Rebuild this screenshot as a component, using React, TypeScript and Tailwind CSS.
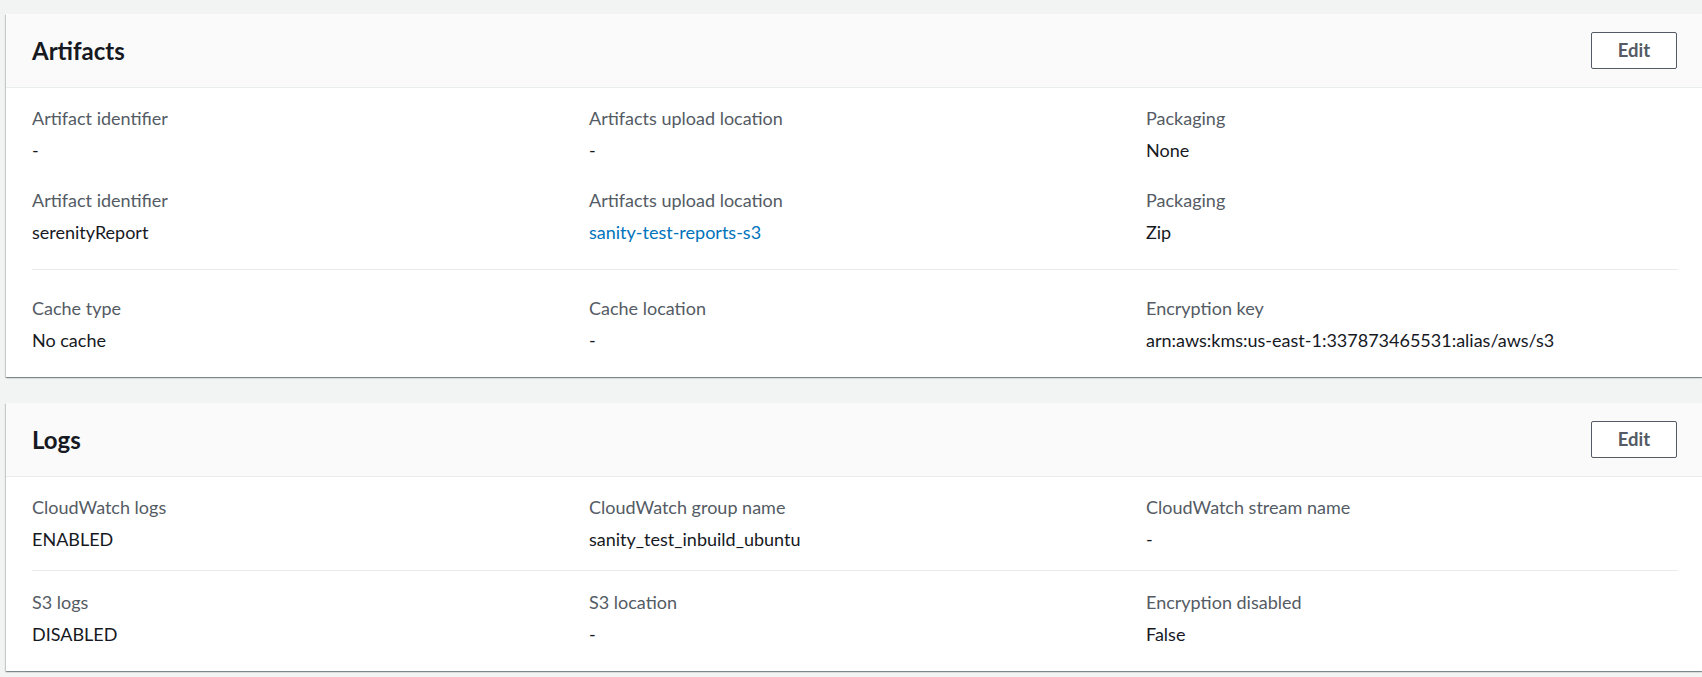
import React from 'react';

type Field = { label: string; value: string; link?: boolean };

const FieldCell = ({ label, value, link }: Field) => (
  <div>
    <div className="text-[18px] leading-[24px] text-[#545b64]">{label}</div>
    <div
      className={`mt-[8px] text-[18px] leading-[24px] ${link ? 'text-[#0073bb]' : 'text-[#16191f]'}`}
    >
      {value}
    </div>
  </div>
);

const Row = ({ fields }: { fields: Field[] }) => (
  <div className="grid grid-cols-3 gap-x-[25px]">
    {fields.map((f, i) => (
      <FieldCell key={i} {...f} />
    ))}
  </div>
);

const Card = ({ title, children }: { title: string; children: React.ReactNode }) => (
  <section className="bg-white shadow-[0_1px_1px_0_rgba(0,28,36,0.3),1px_1px_1px_0_rgba(0,28,36,0.15),-1px_1px_1px_0_rgba(0,28,36,0.15)]">
    <div className="flex h-[74px] items-center justify-between border-b border-[#eaeded] bg-[#fafafa] pl-[26px] pr-[25px]">
      <h2 className="text-[24px] font-bold text-[#16191f]">{title}</h2>
      <button className="h-[37px] w-[86px] rounded-[2px] border border-[#545b64] bg-white text-[18.5px] font-bold text-[#545b64]">
        Edit
      </button>
    </div>
    <div className="pb-[25px] pl-[26px] pr-[24px] pt-[18px]">{children}</div>
  </section>
);

export default function App() {
  return (
    <div
      className="min-h-screen bg-[#f2f3f3] pl-[6px] pt-[14px]"
      style={{ fontFamily: 'Lato, "Noto Sans", sans-serif' }}
    >
      <Card title="Artifacts">
        <Row
          fields={[
            { label: 'Artifact identifier', value: '-' },
            { label: 'Artifacts upload location', value: '-' },
            { label: 'Packaging', value: 'None' },
          ]}
        />
        <div className="mt-[26px]">
          <Row
            fields={[
              { label: 'Artifact identifier', value: 'serenityReport' },
              { label: 'Artifacts upload location', value: 'sanity-test-reports-s3', link: true },
              { label: 'Packaging', value: 'Zip' },
            ]}
          />
        </div>
        <div className="mb-[26px] mt-[25px] border-t border-[#eaeded]" />
        <Row
          fields={[
            { label: 'Cache type', value: 'No cache' },
            { label: 'Cache location', value: '-' },
            { label: 'Encryption key', value: 'arn:aws:kms:us-east-1:337873465531:alias/aws/s3' },
          ]}
        />
      </Card>

      <div className="mt-[26px]">
        <Card title="Logs">
          <Row
            fields={[
              { label: 'CloudWatch logs', value: 'ENABLED' },
              { label: 'CloudWatch group name', value: 'sanity_test_inbuild_ubuntu' },
              { label: 'CloudWatch stream name', value: '-' },
            ]}
          />
          <div className="mb-[19px] mt-[19px] border-t border-[#eaeded]" />
          <Row
            fields={[
              { label: 'S3 logs', value: 'DISABLED' },
              { label: 'S3 location', value: '-' },
              { label: 'Encryption disabled', value: 'False' },
            ]}
          />
        </Card>
      </div>
    </div>
  );
}
